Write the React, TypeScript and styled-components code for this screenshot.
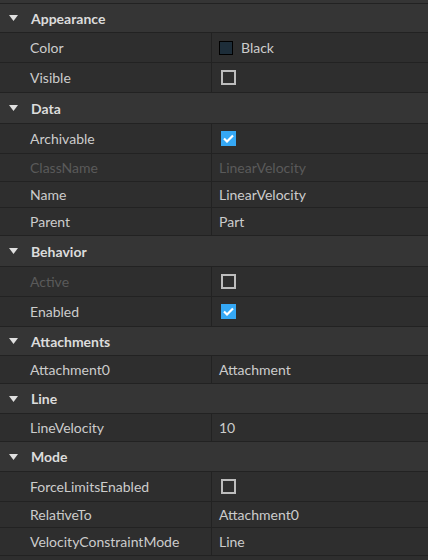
import styled, { createGlobalStyle } from "styled-components";
import { FC } from "react";

type Prop = {
  name: string;
  kind: "text" | "bool" | "color";
  value?: string;
  checked?: boolean;
  disabled?: boolean;
  h: number;
};

type Section = { title: string; h: number; props: Prop[] };

const sections: Section[] = [
  {
    title: "Appearance",
    h: 29,
    props: [
      { name: "Color", kind: "color", value: "Black", h: 30 },
      { name: "Visible", kind: "bool", checked: false, h: 30 },
    ],
  },
  {
    title: "Data",
    h: 31,
    props: [
      { name: "Archivable", kind: "bool", checked: true, h: 30 },
      { name: "ClassName", kind: "text", value: "LinearVelocity", disabled: true, h: 28 },
      { name: "Name", kind: "text", value: "LinearVelocity", h: 26 },
      { name: "Parent", kind: "text", value: "Part", h: 28 },
    ],
  },
  {
    title: "Behavior",
    h: 31,
    props: [
      { name: "Active", kind: "bool", checked: false, disabled: true, h: 30 },
      { name: "Enabled", kind: "bool", checked: true, h: 30 },
    ],
  },
  {
    title: "Attachments",
    h: 29,
    props: [{ name: "Attachment0", kind: "text", value: "Attachment", h: 28 }],
  },
  {
    title: "Line",
    h: 30,
    props: [{ name: "LineVelocity", kind: "text", value: "10", h: 28 }],
  },
  {
    title: "Mode",
    h: 30,
    props: [
      { name: "ForceLimitsEnabled", kind: "bool", checked: false, h: 30 },
      { name: "RelativeTo", kind: "text", value: "Attachment0", h: 26 },
      { name: "VelocityConstraintMode", kind: "text", value: "Line", h: 28 },
    ],
  },
];

const GlobalStyle = createGlobalStyle`
  html, body {
    margin: 0;
    padding: 0;
    background: #2e2e2e;
  }
  body {
    font-family: Lato, "Noto Sans", sans-serif;
    font-size: 14px;
    color: #cccccc;
  }
`;

const Panel = styled.div`
  width: 428px;
  height: 560px;
  overflow: hidden;
  background: #2e2e2e;
  border-top: 3px solid #353535;
  box-sizing: border-box;
`;

const Header = styled.div<{ $h: number }>`
  display: flex;
  align-items: center;
  height: ${(p) => p.$h}px;
  box-sizing: border-box;
  border-top: 1px solid #222222;
  background: #353535;
  font-weight: 700;
  color: #dcdcdc;
`;

const Arrow = styled.span`
  width: 31px;
  display: flex;
  justify-content: center;
  padding-right: 4px;
  box-sizing: border-box;
`;

const Row = styled.div<{ $h: number }>`
  display: grid;
  grid-template-columns: 212px 1fr;
  height: ${(p) => p.$h}px;
  box-sizing: border-box;
  border-top: 1px solid #222222;
  background: #2e2e2e;
`;

const Name = styled.div<{ $disabled?: boolean }>`
  display: flex;
  align-items: center;
  padding-left: 30px;
  border-right: 1px solid #222222;
  color: ${(p) => (p.$disabled ? "#5a5a5a" : "#cccccc")};
  white-space: nowrap;
`;

const Value = styled.div<{ $disabled?: boolean }>`
  display: flex;
  align-items: center;
  gap: 8px;
  padding-left: 7px;
  color: ${(p) => (p.$disabled ? "#5a5a5a" : "#cccccc")};
  white-space: nowrap;
`;

const Swatch = styled.span<{ $color: string }>`
  width: 14px;
  height: 14px;
  box-sizing: border-box;
  border: 1px solid #000;
  background: ${(p) => p.$color};
`;

const Box = styled.span<{ $checked: boolean }>`
  width: 15px;
  height: 15px;
  margin-left: 2px;
  box-sizing: border-box;
  display: flex;
  align-items: center;
  justify-content: center;
  background: ${(p) => (p.$checked ? "#35a8f5" : "transparent")};
  border: ${(p) => (p.$checked ? "none" : "2px solid #bdbdbd")};
`;

const Tail = styled.div`
  border-top: 1px solid #222222;
`;

const Check: FC<{ checked: boolean }> = ({ checked }) => (
  <Box $checked={checked}>
    {checked && (
      <svg width="11" height="9" viewBox="0 0 11 9">
        <path d="M1 4.5 L4 7.5 L10 1.5" fill="none" stroke="#fff" strokeWidth="2.2" />
      </svg>
    )}
  </Box>
);

const Triangle: FC = () => (
  <svg width="9" height="6" viewBox="0 0 9 6">
    <path d="M0 0 H9 L4.5 6 Z" fill="#e0e0e0" />
  </svg>
);

const App: FC = () => (
  <>
    <GlobalStyle />
    <Panel>
      {sections.map((s) => (
        <div key={s.title}>
          <Header $h={s.h}>
            <Arrow>
              <Triangle />
            </Arrow>
            {s.title}
          </Header>
          {s.props.map((p) => (
            <Row key={p.name} $h={p.h}>
              <Name $disabled={p.disabled}>{p.name}</Name>
              <Value $disabled={p.disabled}>
                {p.kind === "color" && <Swatch $color="#1d2d39" />}
                {p.kind === "bool" ? <Check checked={!!p.checked} /> : p.value}
              </Value>
            </Row>
          ))}
        </div>
      ))}
      <Tail />
    </Panel>
  </>
);

export default App;
